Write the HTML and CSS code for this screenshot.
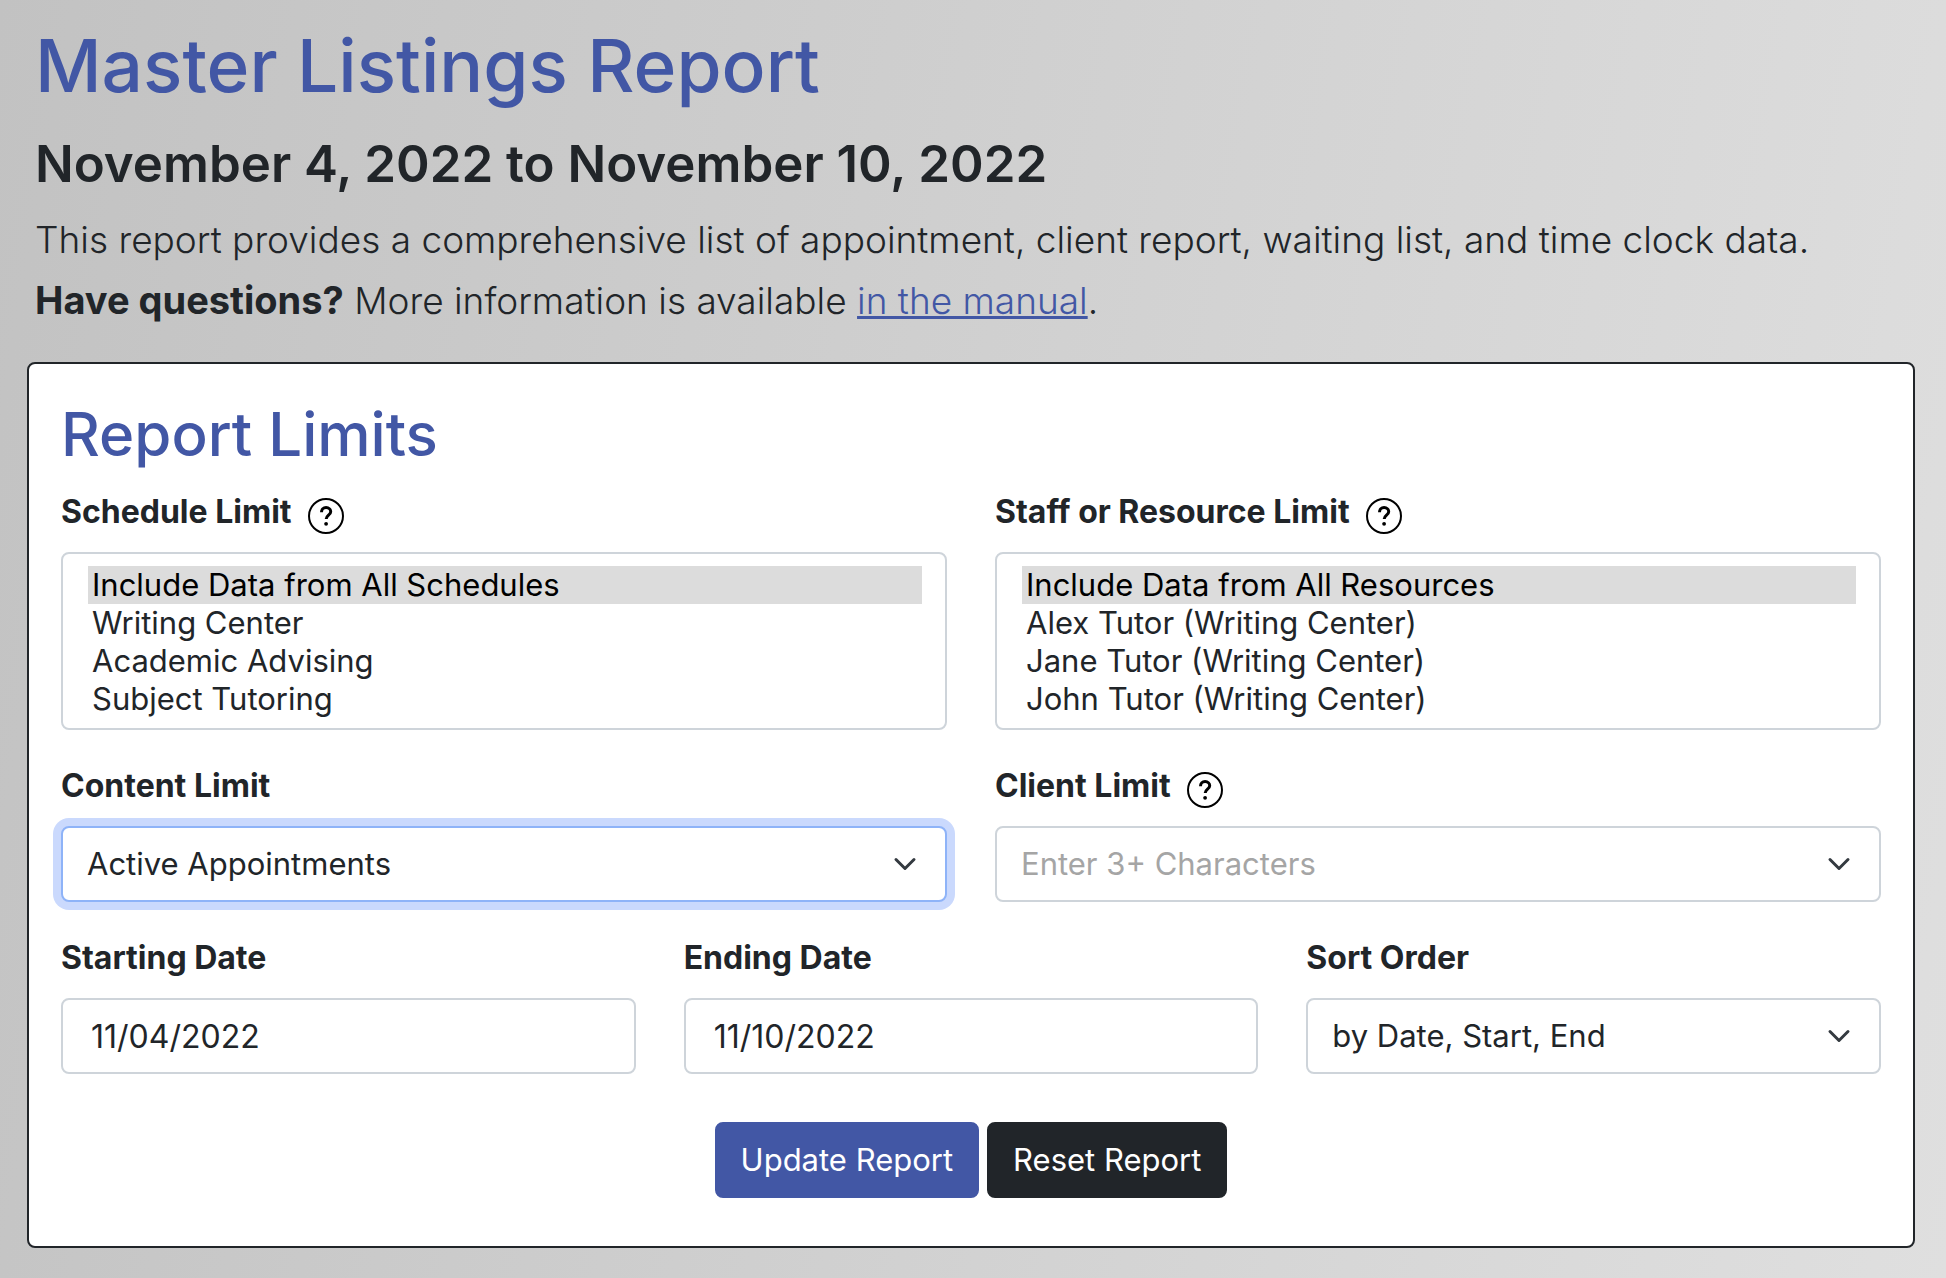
FILE: index.html
```html
<!DOCTYPE html>
<html lang="en">
<head>
    <meta charset="UTF-8">
    <meta name="viewport" content="width=device-width, initial-scale=1.0">
    <title>Master Listings Report</title>
    <link rel="stylesheet" href="styles.css">
</head>
<body>
    <header class="page-header">
        <h1>Master Listings Report</h1>
        <h2>November 4, 2022 to November 10, 2022</h2>
        <p class="lead">This report provides a comprehensive list of appointment, client report, waiting list, and time clock data.<br>
        <strong>Have questions?</strong> More information is available <a href="#manual">in the manual</a>.</p>
    </header>

    <form class="panel">
        <h2 class="panel-title">Report Limits</h2>

        <div class="row two-cols">
            <div class="field">
                <div class="label-row">
                    <label for="schedule">Schedule Limit</label>
                    <button type="button" class="help-btn" aria-label="Schedule Limit help">
                        <svg viewBox="0 0 36 36" class="help-icon">
                            <circle cx="18" cy="18" r="17"></circle>
                            <path d="M13.5 14.2c0-2.8 1.9-4.6 4.6-4.6s4.6 1.7 4.6 4.1c0 3.4-4.5 3.6-4.5 7.3"></path>
                            <circle cx="18.1" cy="25.8" r="1.9" class="dot"></circle>
                        </svg>
                    </button>
                </div>
                <select id="schedule" class="form-list" size="4" multiple>
                    <option selected>Include Data from All Schedules</option>
                    <option>Writing Center</option>
                    <option>Academic Advising</option>
                    <option>Subject Tutoring</option>
                </select>
            </div>
            <div class="field">
                <div class="label-row">
                    <label for="resource">Staff or Resource Limit</label>
                    <button type="button" class="help-btn" aria-label="Staff or Resource Limit help">
                        <svg viewBox="0 0 36 36" class="help-icon">
                            <circle cx="18" cy="18" r="17"></circle>
                            <path d="M13.5 14.2c0-2.8 1.9-4.6 4.6-4.6s4.6 1.7 4.6 4.1c0 3.4-4.5 3.6-4.5 7.3"></path>
                            <circle cx="18.1" cy="25.8" r="1.9" class="dot"></circle>
                        </svg>
                    </button>
                </div>
                <select id="resource" class="form-list" size="4" multiple>
                    <option selected>Include Data from All Resources</option>
                    <option>Alex Tutor (Writing Center)</option>
                    <option>Jane Tutor (Writing Center)</option>
                    <option>John Tutor (Writing Center)</option>
                </select>
            </div>
        </div>

        <div class="row two-cols">
            <div class="field">
                <div class="label-row">
                    <label for="content">Content Limit</label>
                </div>
                <select id="content" class="form-control form-select is-active">
                    <option>Active Appointments</option>
                </select>
            </div>
            <div class="field">
                <div class="label-row">
                    <label for="client">Client Limit</label>
                    <button type="button" class="help-btn" aria-label="Client Limit help">
                        <svg viewBox="0 0 36 36" class="help-icon">
                            <circle cx="18" cy="18" r="17"></circle>
                            <path d="M13.5 14.2c0-2.8 1.9-4.6 4.6-4.6s4.6 1.7 4.6 4.1c0 3.4-4.5 3.6-4.5 7.3"></path>
                            <circle cx="18.1" cy="25.8" r="1.9" class="dot"></circle>
                        </svg>
                    </button>
                </div>
                <select id="client" class="form-control form-select is-empty">
                    <option value="">Enter 3+ Characters</option>
                </select>
            </div>
        </div>

        <div class="row three-cols">
            <div class="field">
                <div class="label-row">
                    <label for="start-date">Starting Date</label>
                </div>
                <input type="text" id="start-date" class="form-control form-date" value="11/04/2022">
            </div>
            <div class="field">
                <div class="label-row">
                    <label for="end-date">Ending Date</label>
                </div>
                <input type="text" id="end-date" class="form-control form-date" value="11/10/2022">
            </div>
            <div class="field">
                <div class="label-row">
                    <label for="sort">Sort Order</label>
                </div>
                <select id="sort" class="form-control form-select">
                    <option>by Date, Start, End</option>
                </select>
            </div>
        </div>

        <div class="actions">
            <button type="submit" class="btn btn-primary">Update Report</button>
            <button type="reset" class="btn btn-dark">Reset Report</button>
        </div>
    </form>
</body>
</html>
```
FILE: styles.css
```css
* {
    box-sizing: border-box;
}

body {
    margin: 0;
    min-height: 100vh;
    padding: 18px 31px 30px 27px;
    font-family: Inter, "Liberation Sans", sans-serif;
    font-size: 31px;
    line-height: 48px;
    color: #212529;
    background: linear-gradient(100deg, #c2c2c2, #dfdfdf);
}

h1,
h2,
p {
    margin: 0;
}

h1,
h2 {
    font-weight: 500;
    line-height: 1.2;
}

.page-header {
    padding: 0 8px;
    margin-bottom: 31px;
}

.page-header h1 {
    font-size: 73px;
    line-height: 96px;
    margin-bottom: 16px;
    color: #4257a5;
}

.page-header h2 {
    font-size: 51px;
    font-weight: 600;
    line-height: 67px;
    margin-bottom: 13px;
}

.lead {
    font-size: 37px;
    font-weight: 300;
    line-height: 60px;
}

.lead strong {
    font-size: 38px;
    font-weight: 700;
}

.lead a {
    color: #4257a5;
}

.panel {
    padding: 32px 32px 48px;
    background-color: #fff;
    border: 2px solid #212529;
    border-radius: 8px;
}

.panel-title {
    font-size: 60px;
    line-height: 76px;
    margin-bottom: 16px;
    color: #4257a5;
}

.row {
    display: grid;
    gap: 48px;
    margin-bottom: 32px;
}

.two-cols {
    grid-template-columns: repeat(2, minmax(0, 1fr));
}

.three-cols {
    grid-template-columns: repeat(3, minmax(0, 1fr));
}

.label-row {
    display: flex;
    align-items: center;
    gap: 16px;
    height: 48px;
    margin-bottom: 16px;
}

.label-row label {
    font-size: 32px;
    font-weight: 700;
}

.help-btn {
    display: flex;
    margin-top: 8px;
    padding: 0;
    border: none;
    background: none;
    cursor: pointer;
}

.help-icon {
    width: 36px;
    height: 36px;
    fill: none;
    stroke: #000;
    stroke-width: 2;
}

.help-icon path {
    stroke-width: 3;
}

.help-icon .dot {
    fill: #000;
    stroke: none;
}

.form-list,
.form-control {
    display: block;
    width: 100%;
    margin: 0;
    font-family: inherit;
    font-size: inherit;
    color: #212529;
    background-color: #fff;
    border: 2px solid #ced4da;
    border-radius: 8px;
    outline: none;
    appearance: none;
}

.form-list {
    height: 178px;
    padding: 12px 23px 12px 25px;
    overflow: hidden;
}

.form-list option {
    padding: 0 4px;
    min-height: 38px;
    line-height: 38px;
}

.form-list option:checked {
    color: #000;
    background: #dcdcdc linear-gradient(#dcdcdc, #dcdcdc);
}

.form-control {
    height: 76px;
    padding: 12px 28px;
    line-height: 48px;
}

.form-date {
    font-size: 32px;
}

.form-select {
    padding: 12px 72px 12px 24px;
    background-image: url("data:image/svg+xml,%3Csvg xmlns='http://www.w3.org/2000/svg' viewBox='0 0 16 16'%3E%3Cpath fill='none' stroke='%23343a40' stroke-linecap='round' stroke-linejoin='round' stroke-width='2' d='m2 5 6 6 6-6'/%3E%3C/svg%3E");
    background-repeat: no-repeat;
    background-position: right 24px center;
    background-size: 32px 24px;
}

.is-empty {
    color: #a5a5a5;
}

.form-control.is-active,
.form-control:focus {
    border-color: #8eb3f8;
    box-shadow: 0 0 0 8px #cad9fd;
}

.actions {
    display: flex;
    justify-content: center;
    gap: 8px;
    padding-top: 16px;
}

.btn {
    padding: 12px 24px;
    font-family: inherit;
    font-size: inherit;
    line-height: 48px;
    color: #fff;
    border: 2px solid transparent;
    border-radius: 8px;
    cursor: pointer;
}

.btn-primary {
    background-color: #4257a5;
    border-color: #4257a5;
}

.btn-dark {
    background-color: #212529;
    border-color: #212529;
}
```
